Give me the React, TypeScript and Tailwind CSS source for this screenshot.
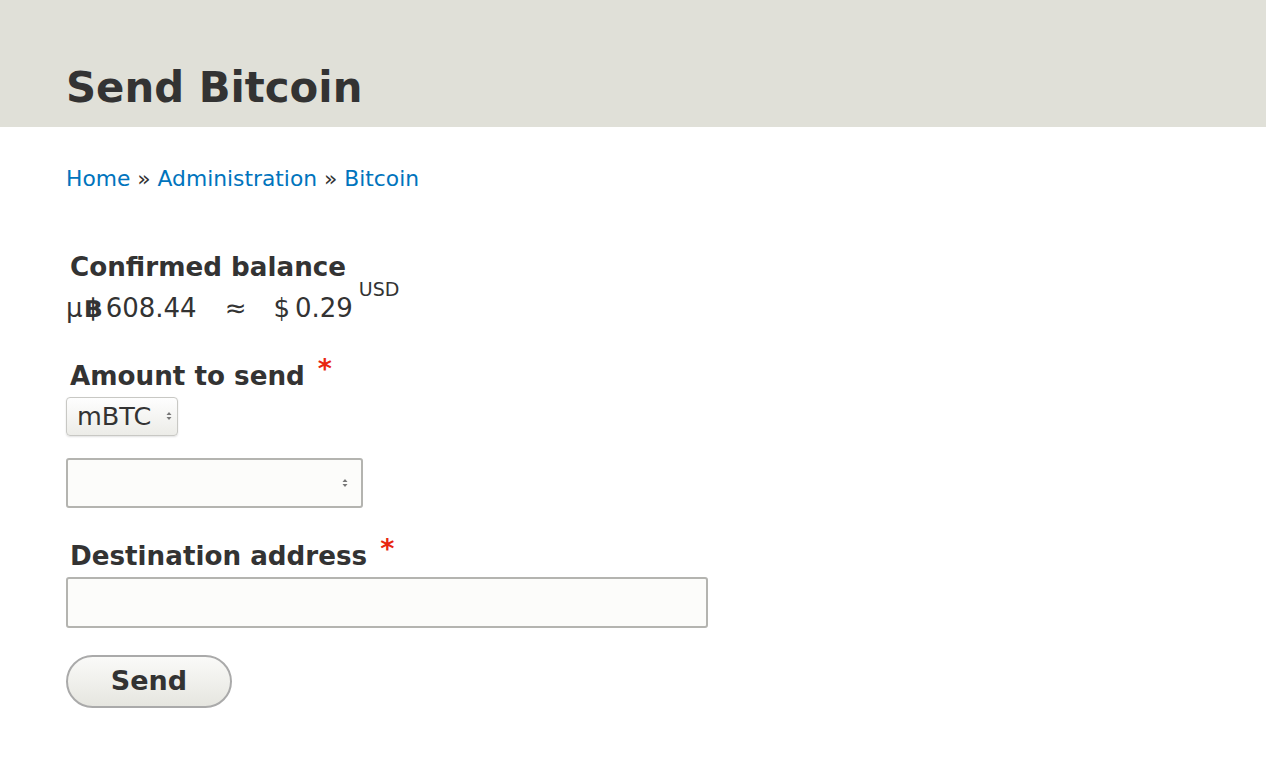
import React from "react";

function Spinner({ className }: { className?: string }) {
  return (
    <svg width="6" height="12" viewBox="0 0 6 12" className={className}>
      <path d="M3 2 L5.5 5 H0.5 Z" fill="#777" />
      <path d="M3 10 L5.5 7 H0.5 Z" fill="#777" />
    </svg>
  );
}

function Required() {
  return <span className="ml-[13px] mt-[-4px] align-top text-[27px] font-bold leading-none text-[#e8260f]">*</span>;
}

export default function App() {
  return (
    <div className="min-h-screen bg-white text-[#333]" style={{ fontFamily: '"DejaVu Sans", Verdana, sans-serif' }}>
      <header className="h-[127px] bg-[#e0e0d8] px-[66px] pt-[62px]">
        <h1 className="text-[41.8px] font-bold leading-[52px]">Send Bitcoin</h1>
      </header>

      <main className="px-[66px]">
        <nav className="mt-[37px] text-[21.8px] leading-[30px]">
          <a href="#" className="text-[#0074bd]">Home</a>
          <span> » </span>
          <a href="#" className="text-[#0074bd]">Administration</a>
          <span> » </span>
          <a href="#" className="text-[#0074bd]">Bitcoin</a>
        </nav>

        <section className="mt-[58px]">
          <div className="pl-[4px] text-[26.2px] font-bold leading-[30px]">Confirmed balance</div>
          <div className="mt-[9px] flex items-start text-[26px] leading-[34px]">
            <span>µ</span>
            <span className="ml-[2px] font-bold">฿</span>
            <span className="ml-[3px]">608.44</span>
            <span className="ml-[28px]">≈</span>
            <span className="ml-[27px]">$</span>
            <span className="ml-[5px]">0.29</span>
            <span className="ml-[6px] -mt-[19px] text-[19px]">USD</span>
          </div>
        </section>

        <section className="mt-[34px]">
          <label className="flex items-start pl-[4px] text-[26.2px] font-bold leading-[34px]">
            Amount to send
            <Required />
          </label>
          <div className="relative mt-[4px] w-[112px]">
            <select className="h-[39px] w-full appearance-none rounded-[4px] border border-[#c8c8c4] bg-gradient-to-b from-[#fefefe] to-[#ecece8] pl-[10px] text-[25.5px] leading-[37px] text-[#333] shadow-[0_1px_2px_rgba(0,0,0,0.12)]">
              <option>mBTC</option>
            </select>
            <Spinner className="pointer-events-none absolute right-[6px] top-[13px]" />
          </div>
          <div className="relative mt-[22px] w-[297px]">
            <input className="h-[50px] w-full rounded-[3px] border-2 border-[#b4b4b0] bg-[#fcfcfa] px-3 text-[25px]" />
            <Spinner className="pointer-events-none absolute right-[15px] top-[19px]" />
          </div>
        </section>

        <section className="mt-[31px]">
          <label className="flex items-start pl-[4px] text-[26.2px] font-bold leading-[34px]">
            Destination address
            <Required />
          </label>
          <input className="mt-[4px] h-[51px] w-[642px] rounded-[3px] border-2 border-[#b4b4b0] bg-[#fcfcfa] px-3 text-[25px]" />
        </section>

        <button className="mt-[27px] h-[53px] w-[166px] rounded-full border-2 border-[#aaa] bg-gradient-to-b from-[#fafaf8] to-[#e6e6e0] text-[27px] font-bold text-[#333]">
          Send
        </button>
      </main>
    </div>
  );
}
